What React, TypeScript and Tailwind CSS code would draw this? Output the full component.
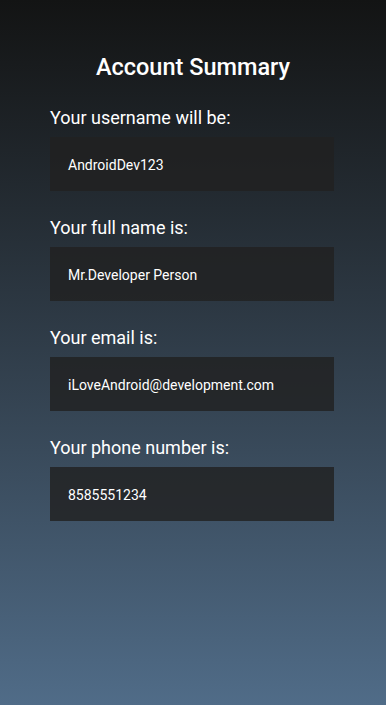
const fields = [
  { label: "Your username will be:", value: "AndroidDev123" },
  { label: "Your full name is:", value: "Mr.Developer Person" },
  { label: "Your email is:", value: "iLoveAndroid@development.com" },
  { label: "Your phone number is:", value: "8585551234" },
];

export default function App() {
  return (
    <div
      className="min-h-[705px] w-full bg-gradient-to-b from-[#131414] to-[#506c88] pt-[51px] text-white"
      style={{ fontFamily: "Roboto, 'Noto Sans', sans-serif" }}
    >
      <h1 className="text-center text-[23.5px] leading-[32px] font-medium">Account Summary</h1>
      <div className="mt-[23px] flex flex-col px-[50px]">
        {fields.map((f) => (
          <div key={f.label} className="mb-[25px] last:mb-0">
            <p className="text-[18px] leading-[24px]">{f.label}</p>
            <div className="mt-[7px] flex h-[54px] w-[284px] items-center bg-[#212121]/[0.82] px-[18px] pt-[2px] text-[14px]">
              {f.value}
            </div>
          </div>
        ))}
      </div>
    </div>
  );
}
